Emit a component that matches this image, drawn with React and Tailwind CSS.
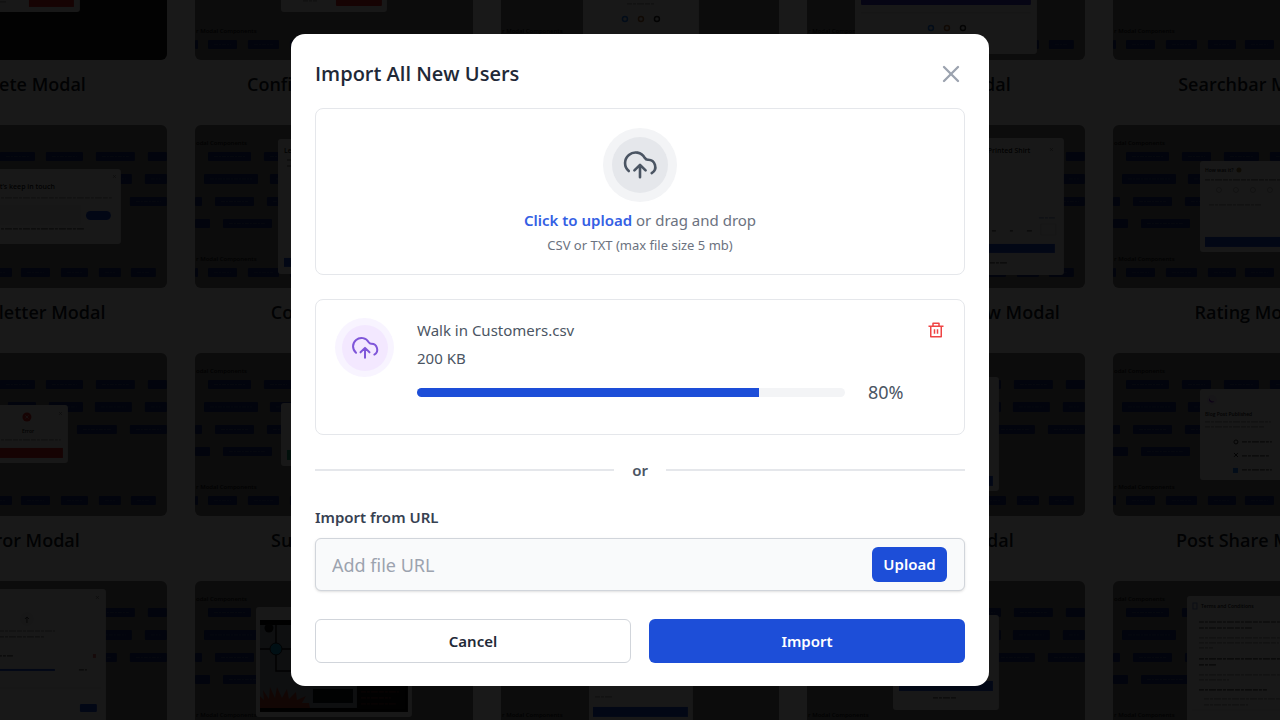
import { X } from "lucide-react";
import { RiDeleteBinLine } from "react-icons/ri";

function CloudUpload({ className, strokeWidth }) {
  return (
    <svg
      viewBox="0 0 40 40"
      fill="none"
      stroke="currentColor"
      strokeWidth={strokeWidth}
      strokeLinecap="round"
      strokeLinejoin="round"
      className={className}
      aria-hidden="true"
    >
      <path d="M8.8 26A10.5 10.5 0 1 1 24.7 12.8c.8 1.3 1.6 2 3 2A7.2 7.2 0 0 1 31.7 28.2" />
      <path d="M20 32.2V20.2M14.4 25.4l5.6-5.6 5.6 5.6" />
    </svg>
  );
}

/* x, y, width, height of the demo buttons seen in every preview */
const chips = [
  [13, 27, 43, 9], [69, 27, 29, 9], [111, 27, 35, 9], [157, 27, 37, 9], [207, 27, 39, 9], [259, 27, 19, 9],
  [9, 49, 54, 10], [75, 49, 32, 10], [119, 49, 28, 10], [160, 49, 34, 10], [206, 49, 37, 10], [256, 49, 22, 10],
  [0, 72, 7, 9], [20, 72, 39, 9], [72, 72, 43, 9], [127, 72, 49, 9], [188, 72, 40, 9], [241, 72, 37, 9],
  [0, 94, 15, 9], [28, 94, 49, 9],
  [0, 143, 3, 9], [13, 143, 29, 9], [53, 143, 31, 9], [95, 143, 28, 9], [132, 143, 29, 9], [172, 143, 27, 9], [210, 143, 22, 9], [242, 143, 25, 9],
];

function Sheet({ x, y, w, h }) {
  return <rect x={x} y={y} width={w} height={h} rx="3" fill="#f4f4f4" />;
}

function Lines({ x, y, widths, step = 6, color = "#a4a4a4" }) {
  return widths.map((w, i) => (
    <line key={i} x1={x} x2={x + w} y1={y + i * step} y2={y + i * step} stroke={color} strokeWidth="1.2" strokeDasharray="5 1 3 1 7 1" />
  ));
}

function Label({ x, y, size = 6, children }) {
  return (
    <text x={x} y={y} fontSize={size} fontWeight="600" fill="#111">
      {children}
    </text>
  );
}

const previews = [
  {
    title: "Delete Modal",
    dark: true,
    art: (
      <>
        <Sheet x={60} y={60} w={131} h={55} />
        <Lines x={82} y={105} widths={[36]} />
        <rect x="140" y="100" width="45" height="10" fill="#e02424" />
      </>
    ),
  },
  {
    title: "Confirmation Modal",
    art: (
      <>
        <Sheet x={86} y={50} w={106} h={65} />
        <Lines x={108} y={104} widths={[14]} />
        <rect x="141" y="99" width="46" height="10" rx="1" fill="#e02424" />
      </>
    ),
  },
  {
    title: "Login Modal",
    art: (
      <>
        <Sheet x={82} y={20} w={116} h={130} />
        <Lines x={126} y={107} widths={[28]} />
        <circle cx="124" cy="122" r="2.5" fill="none" stroke="#1877f2" strokeWidth="1.5" />
        <circle cx="140" cy="122" r="2.5" fill="none" stroke="#a5622c" strokeWidth="1.5" />
        <circle cx="156" cy="122" r="2.5" fill="none" stroke="#222" strokeWidth="1.5" />
      </>
    ),
  },
  {
    title: "Register Modal",
    art: (
      <>
        <Sheet x={48} y={10} w={182} h={147} />
        <rect x="54" y="96" width="170" height="12" rx="1" fill="#4338ca" />
        <line x1="54" x2="224" y1="116" y2="116" stroke="#d4d4d4" />
        <circle cx="124" cy="131" r="2.5" fill="none" stroke="#1877f2" strokeWidth="1.5" />
        <circle cx="140" cy="131" r="2.5" fill="none" stroke="#a5622c" strokeWidth="1.5" />
        <circle cx="156" cy="131" r="2.5" fill="none" stroke="#222" strokeWidth="1.5" />
      </>
    ),
  },
  { title: "Searchbar Modal", art: null },
  {
    title: "Newsletter Modal",
    art: (
      <>
        <Sheet x={50} y={44} w={182} h={75} />
        <path d="M224 50l3 3m0-3l-3 3" stroke="#777" strokeWidth=".7" />
        <Label x={103} y={64} size={7}>Let’s keep in touch</Label>
        <Lines x={70} y={73} widths={[153]} />
        <rect x="62" y="80" width="130" height="20" fill="#e4ecec" />
        <rect x="197" y="86" width="25" height="9" rx="4.5" fill="#1d4ed8" />
        <Lines x={70} y={104} widths={[125]} color="#666" />
      </>
    ),
  },
  {
    title: "Cookies Modal",
    art: (
      <>
        <Sheet x={83} y={14} w={112} h={135} />
        <Label x={89} y={28} size={7}>Let us know</Label>
        <Lines x={92} y={35} widths={[80, 60]} color="#555" />
        <rect x="89" y="133" width="90" height="9" fill="#1d4ed8" />
      </>
    ),
  },
  { title: "Pricing Modal", art: null },
  {
    title: "Product Quick View Modal",
    art: (
      <>
        <Sheet x={20} y={13} w={237} h={137} />
        <Label x={162} y={28} size={7}>Navy Printed Shirt</Label>
        <path d="M243 23l3 3m0-3l-3 3" stroke="#777" strokeWidth=".7" />
        <Lines x={232} y={93} widths={[16]} color="#8295c8" />
        <Lines x={185} y={106} widths={[4]} color="#555" />
        <Lines x={203} y={106} widths={[3]} color="#555" />
        <Lines x={220} y={106} widths={[5]} color="#555" />
        <rect x="234" y="99" width="15" height="11" fill="none" stroke="#ccc" strokeWidth=".7" />
        <rect x="150" y="119" width="98" height="9" fill="#1d4ed8" />
        <Lines x={165} y={138} widths={[35]} color="#555" />
      </>
    ),
  },
  {
    title: "Rating Modal",
    art: (
      <>
        <Sheet x={87} y={36} w={150} h={91} />
        <Label x={92} y={47} size={5}>How was it?</Label>
        <circle cx="126" cy="45" r="2.5" fill="#8a7434" />
        <Lines x={92} y={55} widths={[120]} color="#777" />
        <g fill="none" stroke="#999" strokeWidth=".7">
          <circle cx="106" cy="65" r="2.5" />
          <circle cx="123" cy="65" r="2.5" />
          <circle cx="140" cy="65" r="2.5" />
          <circle cx="157" cy="65" r="2.5" />
        </g>
        <Lines x={96} y={80} widths={[52]} />
        <rect x="92" y="112" width="139" height="10" fill="#1d4ed8" />
      </>
    ),
  },
  {
    title: "Error Modal",
    art: (
      <>
        <Sheet x={70} y={52} w={109} h={58} />
        <circle cx="138" cy="64" r="4.5" fill="#e02424" />
        <path d="M136.5 62.5l3 3m0-3l-3 3" stroke="#f4f4f4" strokeWidth=".7" />
        <path d="M170 59l3 3m0-3l-3 3" stroke="#777" strokeWidth=".7" />
        <Label x={133} y={80} size={5}>Error</Label>
        <Lines x={106} y={87} widths={[66]} />
        <rect x="76" y="95" width="98" height="10" fill="#e02424" />
      </>
    ),
  },
  {
    title: "Success Modal",
    art: (
      <>
        <Sheet x={86} y={50} w={110} h={63} />
        <rect x="92" y="97" width="98" height="10" fill="#0e9f6e" />
      </>
    ),
  },
  { title: "Profile Modal", art: null },
  {
    title: "Discount Modal",
    art: (
      <>
        <Sheet x={90} y={24} w={102} h={114} />
        <rect x="100" y="123" width="86" height="10" fill="#1d4ed8" />
      </>
    ),
  },
  {
    title: "Post Share Modal",
    art: (
      <>
        <Sheet x={87} y={36} w={150} h={91} />
        <circle cx="99" cy="47" r="5" fill="#e4dcf2" />
        <path d="M96.5 45a2.8 2.8 0 1 0 5 3a3.5 3.5 0 0 1-5-3z" fill="#7e22ce" />
        <Label x={92} y={63} size={5}>Blog Post Published</Label>
        <Lines x={92} y={69} widths={[66, 60]} step={5} />
        <circle cx="123" cy="89" r="2" fill="none" stroke="#222" />
        <path d="M121 100l4 4m0-4l-4 4" stroke="#222" />
        <rect x="120" y="115" width="5" height="5" fill="#1877f2" />
        <Lines x={129} y={89} widths={[30, 28, 30]} step={14} color="#555" />
      </>
    ),
  },
  {
    title: "Import Modal",
    art: (
      <>
        <Sheet x={60} y={8} w={157} h={150} />
        <path d="M207 15l3 3m0-3l-3 3" stroke="#777" strokeWidth=".7" />
        <circle cx="138" cy="38" r="7" fill="#e5e7eb" />
        <path d="M138 42v-6m-2 2l2-2 2 2" stroke="#444" fill="none" />
        <Lines x={110} y={50} widths={[56, 46]} color="#888" />
        <Lines x={90} y={75} widths={[34]} color="#555" />
        <rect x="204" y="73" width="3" height="4" fill="#d96a6a" />
        <rect x="90" y="88" width="76" height="2" fill="#1d4ed8" />
        <Lines x={190} y={89} widths={[8]} color="#555" />
        <line x1="70" x2="212" y1="107" y2="107" stroke="#ccc" strokeWidth=".7" />
        <rect x="191" y="123" width="17" height="8" rx="1" fill="#1d4ed8" />
      </>
    ),
  },
  {
    title: "Video Modal",
    art: (
      <>
        <Sheet x={61} y={26} w={156} h={110} />
        <rect x="65" y="39" width="148" height="92" fill="#000" />
        <rect x="65" y="44" width="124" height="83" fill="#8b97a5" />
        <path d="M65 68h50M81 44v46h30" stroke="#111" strokeWidth="1.5" fill="none" />
        <circle cx="74" cy="47" r="4.5" fill="#111" />
        <circle cx="81" cy="68" r="6" fill="#0096c7" stroke="#111" />
        <path d="M65 127l0-12 4 4-1-10 6 9 1-12 5 11 2-11 5 11 5-9 2 10 7-7 1 8 9-4-4 7 7 0 1 5z" fill="#b8402f" />
        <rect x="118" y="108" width="40" height="14" fill="#0b1518" />
        <rect x="162" y="105" width="48" height="23" fill="#101010" />
        <Lines x={166} y={111} widths={[38, 30, 36]} color="#5a2222" />
      </>
    ),
  },
  {
    title: "Payment Modal",
    art: (
      <>
        <Sheet x={88} y={20} w={104} h={143} />
        <Lines x={94} y={116} widths={[18]} />
        <rect x="92" y="126" width="95" height="10" fill="#1d4ed8" />
      </>
    ),
  },
  {
    title: "Verify Modal",
    art: (
      <>
        <Sheet x={86} y={34} w={106} h={95} />
        <rect x="92" y="100" width="94" height="10" fill="#1d4ed8" />
        <Lines x={126} y={117} widths={[24]} color="#666" />
      </>
    ),
  },
  {
    title: "Terms Modal",
    art: (
      <>
        <Sheet x={74} y={15} w={180} h={150} />
        <rect x="80" y="22" width="4" height="6" fill="none" stroke="#6d86cf" />
        <Label x={88} y={27} size={5}>Terms and Conditions</Label>
        <Lines x={86} y={41} widths={[86, 54]} color="#444" />
        <Lines x={86} y={57} widths={[84, 80, 14]} step={5} />
        <Lines x={86} y={78} widths={[84, 18]} color="#444" />
        <Lines x={86} y={94} widths={[82, 30]} step={5} />
        <Lines x={86} y={109} widths={[68]} color="#444" />
        <Lines x={91} y={118} widths={[76, 44]} />
        <line x1="79" x2="250" y1="129" y2="129" stroke="#ccc" strokeWidth=".7" />
      </>
    ),
  },
];

function Preview({ title, art, dark }) {
  return (
    <li className="flex flex-col items-center">
      <svg
        viewBox="0 0 278 163"
        className={dark ? "w-full rounded-md bg-[#181818]" : "w-full rounded-md bg-[#787878]"}
        aria-hidden="true"
      >
        {!dark && (
          <>
            <text x="1" y="20" fontSize="6" fontWeight="600" fill="#111">odal Components</text>
            <text x="1" y="136" fontSize="6" fontWeight="600" fill="#111">r Modal Components</text>
            {chips.map(([x, y, w, h]) => (
              <g key={`${x}-${y}`}>
                <rect x={x} y={y} width={w} height={h} rx="1" fill="#142a80" />
                {w > 20 && (
                  <line x1={x + 6} x2={x + w - 6} y1={y + h / 2} y2={y + h / 2} stroke="#3f5294" strokeDasharray="4 1 2 1" />
                )}
              </g>
            ))}
          </>
        )}
        {art}
      </svg>
      <p className="h-[65px] pt-2.5 text-lg leading-7 font-semibold whitespace-nowrap text-[#111827]">{title}</p>
    </li>
  );
}

function UploadArea() {
  return (
    <label className="flex cursor-pointer flex-col items-center rounded-lg border border-[#e5e7eb] pt-[19px] pb-4">
      <input type="file" accept=".csv,.txt" className="sr-only" />
      <span className="flex size-[74px] items-center justify-center rounded-full bg-[#f3f4f6]">
        <span className="flex size-14 items-center justify-center rounded-full bg-[#e5e7eb] text-[#4b5563]">
          <CloudUpload className="size-10" strokeWidth="2.6" />
        </span>
      </span>
      <span className="mt-1.5 text-[15px] leading-6 text-[#6b7280]">
        <span className="font-semibold text-[#3460e4]">Click to upload</span> or drag and drop
      </span>
      <span className="text-[13px] leading-[26px] text-[#6b7280]">CSV or TXT (max file size 5 mb)</span>
    </label>
  );
}

function FileProgress({ name, size, percent }) {
  return (
    <div className="mt-6 flex items-start gap-[23px] rounded-lg border border-[#e5e7eb] px-[19px] pt-[18px] pb-[30px]">
      <span className="flex size-[59px] shrink-0 items-center justify-center rounded-full bg-[#f8f4ff]">
        <span className="flex size-[46px] items-center justify-center rounded-full bg-[#f3e8ff] text-[#7f56d9]">
          <CloudUpload className="size-8" strokeWidth="2.5" />
        </span>
      </span>
      <div className="min-w-0 flex-1 text-[#4b5563]">
        <p className="text-[15px] leading-6">{name}</p>
        <p className="mt-1 text-[15px] leading-6">{size}</p>
        <div className="mt-2.5 flex items-center gap-[23px]">
          <div
            role="progressbar"
            aria-label={name}
            aria-valuenow={percent}
            className="h-[9px] flex-1 overflow-hidden rounded-full bg-[#f3f4f6]"
          >
            <div className="h-full bg-[#1d4ed8]" style={{ width: `${percent}%` }} />
          </div>
          <span className="w-9 text-lg leading-6">{percent}%</span>
        </div>
      </div>
      <button type="button" aria-label="Remove file" className="flex h-6 items-center text-[#ef4444]">
        <RiDeleteBinLine size={18} />
      </button>
    </div>
  );
}

function ImportDialog() {
  return (
    <form
      role="dialog"
      aria-labelledby="dialog-title"
      onSubmit={(e) => e.preventDefault()}
      className="w-full max-w-[698px] rounded-[14px] bg-white px-6 pt-6 pb-[23px] font-['Noto_Sans',sans-serif]"
    >
      <header className="mb-[18px] flex h-8 items-center justify-between">
        <h1 id="dialog-title" className="font-['Open_Sans',sans-serif] text-xl font-semibold text-[#1f2937]">
          Import All New Users
        </h1>
        <button type="button" aria-label="Close" className="text-[#9ca3af]">
          <X size={28} />
        </button>
      </header>
      <UploadArea />
      <FileProgress name="Walk in Customers.csv" size="200 KB" percent={80} />
      <div className="mt-6 flex items-center gap-[18px]">
        <span className="h-0.5 flex-1 bg-[#e5e7eb]" />
        <span className="text-[15px] leading-[22px] font-semibold text-[#4b5563]">or</span>
        <span className="h-0.5 flex-1 bg-[#e5e7eb]" />
      </div>
      <label htmlFor="file-url" className="mt-6 block text-[15px] leading-6 font-semibold text-[#374151]">
        Import from URL
      </label>
      <div className="mt-[9px] flex h-[53px] items-center rounded-md border border-[#d1d5db] bg-[#f9fafb] pr-[17px] pl-4 shadow-sm">
        <input
          id="file-url"
          type="url"
          placeholder="Add file URL"
          className="min-w-0 flex-1 bg-transparent text-lg text-[#374151] outline-none placeholder:text-[#9ca3af]"
        />
        <button type="button" className="h-[35px] w-[75px] rounded-md bg-[#1d4ed8] text-[15px] font-semibold text-white">
          Upload
        </button>
      </div>
      <div className="mt-7 grid grid-cols-2 gap-[18px]">
        <button type="button" className="h-11 rounded-md border border-[#d1d5db] text-[15px] font-semibold text-[#1f2937]">
          Cancel
        </button>
        <button type="submit" className="h-11 rounded-md bg-[#1d4ed8] text-[15px] font-semibold text-white">
          Import
        </button>
      </div>
    </form>
  );
}

export default function App() {
  return (
    <div className="relative h-screen overflow-hidden bg-white font-['Open_Sans','Noto_Sans',sans-serif]">
      <main className="flex h-full items-center justify-center">
        <ul className="grid w-[117.3%] shrink-0 grid-cols-5 gap-x-7 pb-3.5">
          {previews.map((p) => (
            <Preview key={p.title} {...p} />
          ))}
        </ul>
      </main>
      <div className="absolute inset-0 flex items-center justify-center bg-black/90">
        <ImportDialog />
      </div>
    </div>
  );
}
